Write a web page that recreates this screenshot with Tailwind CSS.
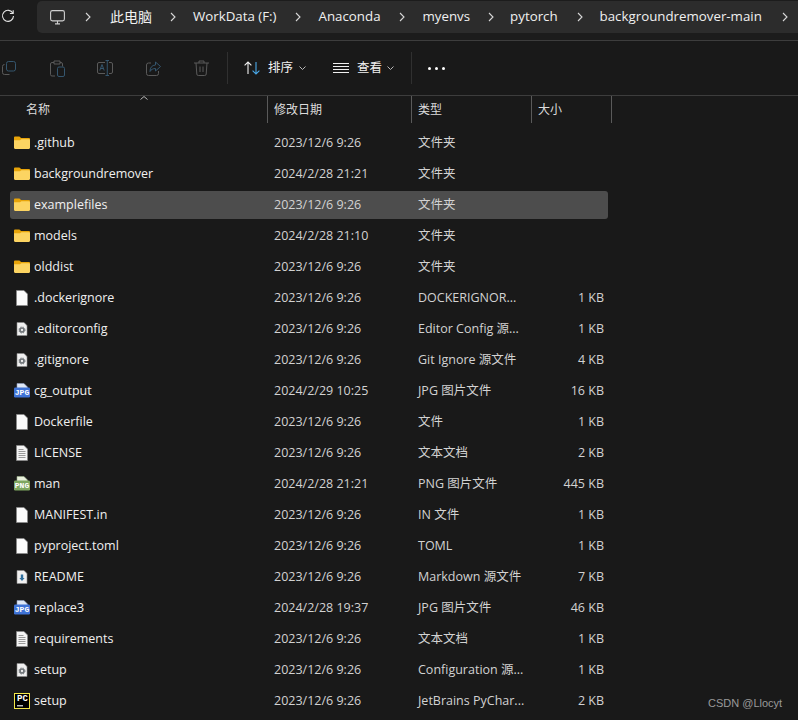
<!DOCTYPE html>
<html lang="en">
<head>
  <meta charset="UTF-8">
  <title>backgroundremover-main</title>
  <script src="https://cdn.jsdelivr.net/npm/@tailwindcss/browser@4"></script>
</head>
<body class="bg-[#191919] h-[720px] w-[798px] overflow-hidden relative text-[#f0f0f0] font-['Open_Sans','Noto_Sans_CJK_SC',sans-serif]">

  <!-- Icon sheet -->
  <svg class="hidden">
    <symbol id="folder" viewBox="0 0 16 16">
      <path d="M0 2.600C0 1.900.5 1.400 1.200 1.400h4.200l1.700 1.500h7.700c.7 0 1.200.5 1.200 1.200V6H0z" fill="#e8a409"/>
      <path d="M0 5.300h6l1.400-1h7.400c.7 0 1.200.5 1.200 1.200v7.300c0 .7-.5 1.200-1.200 1.200H1.200c-.7 0-1.200-.5-1.200-1.200z" fill="#fcd462"/>
    </symbol>
    <symbol id="blank" viewBox="0 0 16 16">
      <path d="M2.500.5H10L13.500 4v11.500h-11z" fill="#fbfbfb" stroke="#8a8a8a" stroke-width=".7"/>
    </symbol>
    <symbol id="config" viewBox="0 0 16 16">
      <path d="M3 1.500h7L13 4.500v10H3z" fill="#f0f0f0" stroke="#8a8a8a" stroke-width=".6"/>
      <circle cx="8" cy="9" r="2" fill="none" stroke="#6f7478" stroke-width="1.700"/>
      <circle cx="8" cy="9" r="3.100" fill="none" stroke="#6f7478" stroke-width=".9" stroke-dasharray="1.200 1.300"/>
    </symbol>
    <symbol id="text" viewBox="0 0 16 16">
      <path d="M2.500.5H10L13.500 4v11.500h-11z" fill="#f4f4f4" stroke="#8a8a8a" stroke-width=".7"/>
      <path d="M4.500 4.500h5M4.500 6.500h7M4.500 8.500h7M4.500 10.500h7M4.500 12.500h7" stroke="#8f8f8f" stroke-width=".9"/>
    </symbol>
    <symbol id="readme" viewBox="0 0 16 16">
      <path d="M3 1.500h7L13 4.500v10H3z" fill="#f0f0f0" stroke="#8a8a8a" stroke-width=".6"/>
      <path d="M6.800 5.500h2.400v3.500h1.400L8 12 5.400 9h1.400z" fill="#2f6f9e"/>
    </symbol>
    <symbol id="jpg" viewBox="0 0 16 16">
      <path d="M3 .5h7l3.500 3.500v3H3z" fill="#dfe7f5" stroke="#8d9cc0" stroke-width=".6"/>
      <rect x="0" y="4.500" width="16" height="10" rx="1.200" fill="#3f73d6"/>
    </symbol>
    <symbol id="png" viewBox="0 0 16 16">
      <path d="M3 .5h7l3.500 3.500v3H3z" fill="#e8f0dc" stroke="#9bb08a" stroke-width=".6"/>
      <rect x="0" y="4.500" width="16" height="10" rx="1.200" fill="#7fa760"/>
    </symbol>
    <symbol id="pycharm" viewBox="0 0 16 16">
      <rect x=".5" y=".5" width="15" height="15" fill="#000" stroke="#f2e64a"/>
      <path d="M3 12.800h6" stroke="#fff" stroke-width="1.100"/>
    </symbol>
  </svg>

  <!-- Address bar -->
  <header class="h-[41px] border-b border-[#3d3d3d] bg-[#1c1c1c] flex items-start">
    <svg class="w-[14px] h-[14px] ml-px mt-[9px]" viewBox="0 0 14 14" fill="none" stroke="#e6e6e6" stroke-width="1.100"><path d="M11.900 4.300A5.500 5.500 0 1 0 12.500 7"/><path d="M12.200 1.200v3.300H8.900"/></svg>
    <nav class="ml-[22px] mt-px h-[32px] w-[761px] shrink-0 rounded-l-[5px] bg-[#2c2c2c] flex items-center text-[13.3px] leading-none whitespace-nowrap">
      <svg class="w-[15px] h-[15px] ml-[13px] shrink-0" viewBox="0 0 15 15" fill="none" stroke="#cfcfcf" stroke-width="1.100"><rect x=".6" y=".6" width="13.800" height="10.300" rx="1.800"/><path d="M5 13.900h5M7.500 11v2.900"/></svg>
      <svg class="w-[6px] h-[10px] ml-[20px] shrink-0" viewBox="0 0 6 10" fill="none" stroke="#d8d8d8" stroke-width="1.100"><path d="m1 1 4 4-4 4"/></svg>
      <span class="ml-[19px] text-[14px]">此电脑</span>
      <svg class="w-[6px] h-[10px] ml-[18px] shrink-0" viewBox="0 0 6 10" fill="none" stroke="#d8d8d8" stroke-width="1.100"><path d="m1 1 4 4-4 4"/></svg>
      <span class="ml-[17px]">WorkData (F:)</span>
      <svg class="w-[6px] h-[10px] ml-[18px] shrink-0" viewBox="0 0 6 10" fill="none" stroke="#d8d8d8" stroke-width="1.100"><path d="m1 1 4 4-4 4"/></svg>
      <span class="ml-[18px]">Anaconda</span>
      <svg class="w-[6px] h-[10px] ml-[18px] shrink-0" viewBox="0 0 6 10" fill="none" stroke="#d8d8d8" stroke-width="1.100"><path d="m1 1 4 4-4 4"/></svg>
      <span class="ml-[18px]">myenvs</span>
      <svg class="w-[6px] h-[10px] ml-[18px] shrink-0" viewBox="0 0 6 10" fill="none" stroke="#d8d8d8" stroke-width="1.100"><path d="m1 1 4 4-4 4"/></svg>
      <span class="ml-[16px]">pytorch</span>
      <svg class="w-[6px] h-[10px] ml-[19px] shrink-0" viewBox="0 0 6 10" fill="none" stroke="#d8d8d8" stroke-width="1.100"><path d="m1 1 4 4-4 4"/></svg>
      <span class="ml-[17px]">backgroundremover-main</span>
      <svg class="w-[6px] h-[10px] ml-[20px] shrink-0" viewBox="0 0 6 10" fill="none" stroke="#d8d8d8" stroke-width="1.100"><path d="m1 1 4 4-4 4"/></svg>
    </nav>
  </header>

  <!-- Command bar -->
  <div class="h-[55px] border-b border-[#3d3d3d] flex items-center text-[12.5px] leading-none">
    <svg class="w-[14px] h-[14px] ml-[2px] shrink-0" viewBox="0 0 14 14" fill="none" stroke-width="1"><rect x="4.500" y=".5" width="9" height="9.500" rx="2" stroke="#35566e"/><path d="M2.500 3.500A2 2 0 0 0 .5 5.500v6a2 2 0 0 0 2 2h5" stroke="#5a5a5a"/></svg>
    <svg class="w-[15px] h-[17px] ml-[34px] shrink-0" viewBox="0 0 15 17" fill="none" stroke-width="1"><path d="M4 2.500H2A1.500 1.500 0 0 0 .5 4v10.500A1.500 1.500 0 0 0 2 16h3M10 2.500h1A1.500 1.500 0 0 1 12.500 4v2.500M4 1h6v3H4z" stroke="#5a5a5a"/><rect x="7.500" y="7" width="7" height="9.500" rx="1.500" stroke="#35566e"/></svg>
    <svg class="w-[16px] h-[16px] ml-[32px] shrink-0" viewBox="0 0 16 16" fill="none" stroke-width="1"><path d="M8 2.500H2A1.500 1.500 0 0 0 .5 4v8A1.500 1.500 0 0 0 2 13.500h6M12 2.500h2A1.500 1.500 0 0 1 15.500 4v8a1.500 1.500 0 0 1-1.500 1.500h-2" stroke="#5a5a5a"/><path d="M8.500.5h3.500M8.500 15.500H12M10.250.5v15" stroke="#35566e"/><path d="m2.800 10.500 2.200-6 2.200 6M3.600 8.500h2.800" stroke="#35566e"/></svg>
    <svg class="w-[15px] h-[15px] ml-[33px] shrink-0" viewBox="0 0 15 15" fill="none" stroke-width="1"><path d="M5 2H2.500a2 2 0 0 0-2 2v8.500a2 2 0 0 0 2 2h8a2 2 0 0 0 2-2V10" stroke="#5a5a5a"/><path d="M9.500 1 14.500 5.500 9.500 10V7.500C7 7.500 5 8.500 4 10.500c0-4 2-6.300 5.500-6.500z" stroke="#35566e"/></svg>
    <svg class="w-[15px] h-[16px] ml-[33px] shrink-0" viewBox="0 0 15 16" fill="none" stroke="#5a5a5a" stroke-width="1"><path d="M0 3h15M5 3V1h5v2M2 3l.8 11a1.500 1.500 0 0 0 1.500 1.500h6.400a1.500 1.500 0 0 0 1.500-1.500L13 3M6 6.500V12M9 6.500V12"/></svg>
    <div class="w-px h-[32px] bg-[#303030] ml-[18px] shrink-0"></div>
    <svg class="w-[16px] h-[14px] ml-[16px] shrink-0" viewBox="0 0 16 14" fill="none" stroke-width="1.100"><path d="M4 13V1M.6 4.400 4 1l3.400 3.400" stroke="#f0f0f0"/><path d="M12 1v12M8.600 9.600 12 13l3.400-3.400" stroke="#4aa8e8"/></svg>
    <span class="ml-[8px] pt-px">排序</span>
    <svg class="w-[7px] h-[4px] ml-[6px] shrink-0" viewBox="0 0 7 4" fill="none" stroke="#b8b8b8"><path d="m.5.500 3 3 3-3"/></svg>
    <svg class="w-[16px] h-[10px] ml-[27px] shrink-0" viewBox="0 0 16 10" fill="none" stroke="#f0f0f0"><path d="M0 .5h16M0 3.500h16M0 6.500h16M0 9.500h16"/></svg>
    <span class="ml-[8px] pt-px">查看</span>
    <svg class="w-[7px] h-[4px] ml-[5px] shrink-0" viewBox="0 0 7 4" fill="none" stroke="#b8b8b8"><path d="m.5.500 3 3 3-3"/></svg>
    <div class="w-px h-[32px] bg-[#303030] ml-[17px] shrink-0"></div>
    <div class="ml-[16px] flex gap-[4px]">
      <span class="w-[3px] h-[3px] rounded-full bg-white"></span>
      <span class="w-[3px] h-[3px] rounded-full bg-white"></span>
      <span class="w-[3px] h-[3px] rounded-full bg-white"></span>
    </div>
  </div>

  <!-- Column headers -->
  <div class="relative h-[27px] flex text-[12px] leading-none text-[#dcdcdc]">
    <svg class="absolute left-[140px] top-0 w-[8px] h-[4px]" viewBox="0 0 8 4" fill="none" stroke="#b8b8b8"><path d="m.5 3.500 3.500-3 3.500 3"/></svg>
    <div class="w-[267px] pl-[26px] pt-[8px]">名称</div>
    <div class="w-[144px] pl-[6px] pt-[8px] border-l border-[#5a5a5a]">修改日期</div>
    <div class="w-[120px] pl-[6px] pt-[8px] border-l border-[#5a5a5a]">类型</div>
    <div class="w-[81px] pl-[6px] pt-[8px] border-x border-[#5a5a5a]">大小</div>
  </div>

  <!-- File list -->
  <main id="rows" class="mt-[6px] ml-[10px] w-[598px] flex flex-col gap-[3px] text-[12.5px] leading-none"></main>

  <div class="absolute left-[708px] top-[696px] text-[11px] leading-[14px] text-[#9a9a9a] font-['Liberation_Sans',sans-serif]">CSDN @Llocyt</div>

  <script>
    const files = [
      ['folder', '.github', '2023/12/6 9:26', '文件夹', ''],
      ['folder', 'backgroundremover', '2024/2/28 21:21', '文件夹', ''],
      ['folder', 'examplefiles', '2023/12/6 9:26', '文件夹', ''],
      ['folder', 'models', '2024/2/28 21:10', '文件夹', ''],
      ['folder', 'olddist', '2023/12/6 9:26', '文件夹', ''],
      ['blank', '.dockerignore', '2023/12/6 9:26', 'DOCKERIGNOR...', '1 KB'],
      ['config', '.editorconfig', '2023/12/6 9:26', 'Editor Config 源...', '1 KB'],
      ['config', '.gitignore', '2023/12/6 9:26', 'Git Ignore 源文件', '4 KB'],
      ['jpg', 'cg_output', '2024/2/29 10:25', 'JPG 图片文件', '16 KB'],
      ['blank', 'Dockerfile', '2023/12/6 9:26', '文件', '1 KB'],
      ['text', 'LICENSE', '2023/12/6 9:26', '文本文档', '2 KB'],
      ['png', 'man', '2024/2/28 21:21', 'PNG 图片文件', '445 KB'],
      ['blank', 'MANIFEST.in', '2023/12/6 9:26', 'IN 文件', '1 KB'],
      ['blank', 'pyproject.toml', '2023/12/6 9:26', 'TOML', '1 KB'],
      ['readme', 'README', '2023/12/6 9:26', 'Markdown 源文件', '7 KB'],
      ['jpg', 'replace3', '2024/2/28 19:37', 'JPG 图片文件', '46 KB'],
      ['text', 'requirements', '2023/12/6 9:26', '文本文档', '1 KB'],
      ['config', 'setup', '2023/12/6 9:26', 'Configuration 源...', '1 KB'],
      ['pycharm', 'setup', '2023/12/6 9:26', 'JetBrains PyChar...', '2 KB'],
    ];

    // badge text sits over the coloured part of the icon as real text
    const badges = { jpg: 'JPG', png: 'PNG', pycharm: 'PC' };

    document.getElementById('rows').innerHTML = files.map(([icon, name, date, type, size], i) => `
      <div class="h-[28px] shrink-0 rounded-[3px] flex items-center ${i === 2 ? 'bg-[#4d4d4d]' : ''}">
        <div class="relative w-[16px] h-[16px] ml-[4px] shrink-0">
          <svg class="w-[16px] h-[16px]"><use href="#${icon}"/></svg>
          ${badges[icon] ? `<span class="absolute left-0 right-0 ${icon === 'pycharm' ? 'top-[2px] text-[9px] leading-[9px] left-[3px] text-left' : 'top-[5px] text-[8px] leading-[9px] text-center'} font-bold text-white font-['Liberation_Mono',monospace]">${badges[icon]}</span>` : ''}
        </div>
        <span class="w-[244px] pl-[4px] shrink-0 whitespace-nowrap">${name}</span>
        <span class="w-[144px] shrink-0 text-[#d2d2d2]">${date}</span>
        <span class="w-[120px] shrink-0 text-[#d2d2d2] whitespace-nowrap">${type}</span>
        <span class="w-[66px] shrink-0 text-right text-[#d2d2d2]">${size}</span>
      </div>`).join('');
  </script>
</body>
</html>
